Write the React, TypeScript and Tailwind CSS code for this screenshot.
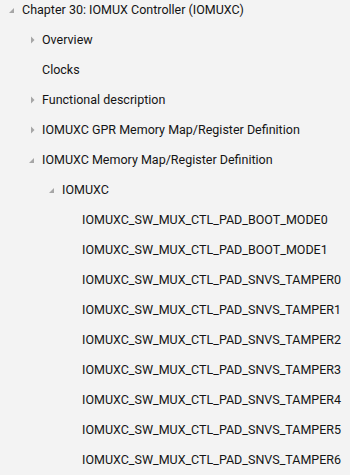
import React from "react";

type Item = { label: string; level: number; icon: "open" | "closed" | "none" };

const items: Item[] = [
  { label: "Chapter 30: IOMUX Controller (IOMUXC)", level: 0, icon: "open" },
  { label: "Overview", level: 1, icon: "closed" },
  { label: "Clocks", level: 1, icon: "none" },
  { label: "Functional description", level: 1, icon: "closed" },
  { label: "IOMUXC GPR Memory Map/Register Definition", level: 1, icon: "closed" },
  { label: "IOMUXC Memory Map/Register Definition", level: 1, icon: "open" },
  { label: "IOMUXC", level: 2, icon: "open" },
  { label: "IOMUXC_SW_MUX_CTL_PAD_BOOT_MODE0", level: 3, icon: "none" },
  { label: "IOMUXC_SW_MUX_CTL_PAD_BOOT_MODE1", level: 3, icon: "none" },
  { label: "IOMUXC_SW_MUX_CTL_PAD_SNVS_TAMPER0", level: 3, icon: "none" },
  { label: "IOMUXC_SW_MUX_CTL_PAD_SNVS_TAMPER1", level: 3, icon: "none" },
  { label: "IOMUXC_SW_MUX_CTL_PAD_SNVS_TAMPER2", level: 3, icon: "none" },
  { label: "IOMUXC_SW_MUX_CTL_PAD_SNVS_TAMPER3", level: 3, icon: "none" },
  { label: "IOMUXC_SW_MUX_CTL_PAD_SNVS_TAMPER4", level: 3, icon: "none" },
  { label: "IOMUXC_SW_MUX_CTL_PAD_SNVS_TAMPER5", level: 3, icon: "none" },
  { label: "IOMUXC_SW_MUX_CTL_PAD_SNVS_TAMPER6", level: 3, icon: "none" },
];

const indentClass = ["pl-[8px]", "pl-[28px]", "pl-[48px]", "pl-[68px]"];

function Icon({ kind }: { kind: Item["icon"] }) {
  if (kind === "open")
    return (
      <svg width="14" height="14" viewBox="0 0 14 14" className="shrink-0">
        <polygon points="1,10 6,10 6,5" fill="#a6a6a6" />
      </svg>
    );
  if (kind === "closed")
    return (
      <svg width="14" height="14" viewBox="0 0 14 14" className="shrink-0">
        <polygon points="3,3.5 6.5,7 3,10.5" fill="#a6a6a6" />
      </svg>
    );
  return <span className="w-[14px] shrink-0" />;
}

export default function App() {
  return (
    <div
      className="w-[350px] h-[475px] overflow-hidden bg-[#f3f3f3] text-[#141414]"
      style={{ fontFamily: 'Roboto, "Noto Sans", sans-serif' }}
    >
      <ul className="-mt-[5px]">
        {items.map((it, i) => (
          <li
            key={i}
            className={`flex items-center h-[30px] whitespace-nowrap text-[12.5px] ${indentClass[it.level]}`}
          >
            <Icon kind={it.icon} />
            <span>{it.label}</span>
          </li>
        ))}
      </ul>
    </div>
  );
}
